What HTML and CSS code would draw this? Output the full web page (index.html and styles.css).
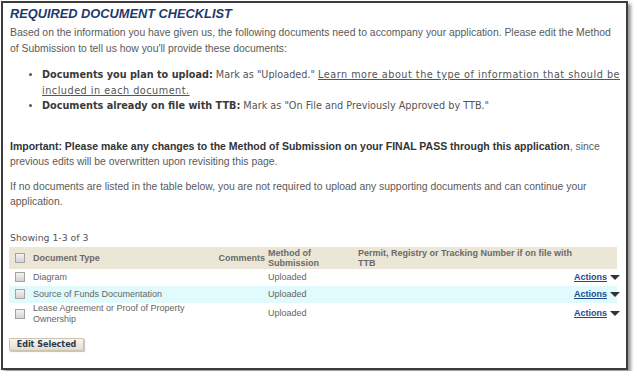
FILE: index.html
```html
<!DOCTYPE html>
<html lang="en">
<head>
    <meta charset="UTF-8">
    <title>Required Document Checklist</title>
    <link rel="stylesheet" href="styles.css">
</head>
<body>

    <!-- checklist panel -->
    <div class="panel">
        <h2 class="panel-title">REQUIRED DOCUMENT CHECKLIST</h2>
        <p class="intro">Based on the information you have given us, the following documents need to accompany your application. Please edit the Method of Submission to tell us how you'll provide these documents:</p>

        <ul class="rules">
            <li><strong>Documents you plan to upload:</strong> Mark as "Uploaded." <a href="#">Learn more about the type of information that should be included in each document.</a></li>
            <li><strong>Documents already on file with TTB:</strong> Mark as "On File and Previously Approved by TTB."</li>
        </ul>

        <p class="important"><strong>Important: Please make any changes to the Method of Submission on your FINAL PASS through this application</strong>, since previous edits will be overwritten upon revisiting this page.</p>
        <p class="note">If no documents are listed in the table below, you are not required to upload any supporting documents and can continue your application.</p>

        <div class="showing">Showing 1-3 of 3</div>

        <table class="docs">
            <colgroup>
                <col class="w-check">
                <col class="w-type">
                <col class="w-comments">
                <col class="w-method">
                <col class="w-permit">
                <col>
            </colgroup>
            <thead>
                <tr>
                    <th class="col-check"><span class="cb"></span></th>
                    <th>Document Type</th>
                    <th class="col-comments">Comments</th>
                    <th>Method of Submission</th>
                    <th class="col-permit">Permit, Registry or Tracking Number if on file with TTB</th>
                    <th></th>
                </tr>
            </thead>
            <tbody>
                <tr>
                    <td class="col-check"><span class="cb"></span></td>
                    <td>Diagram</td>
                    <td></td>
                    <td>Uploaded</td>
                    <td></td>
                    <td class="col-actions"><a href="#">Actions</a><span class="caret"></span></td>
                </tr>
                <tr class="alt">
                    <td class="col-check"><span class="cb"></span></td>
                    <td>Source of Funds Documentation</td>
                    <td></td>
                    <td>Uploaded</td>
                    <td></td>
                    <td class="col-actions"><a href="#">Actions</a><span class="caret"></span></td>
                </tr>
                <tr class="tall">
                    <td class="col-check"><span class="cb"></span></td>
                    <td>Lease Agreement or Proof of Property Ownership</td>
                    <td></td>
                    <td>Uploaded</td>
                    <td></td>
                    <td class="col-actions"><a href="#">Actions</a><span class="caret"></span></td>
                </tr>
            </tbody>
        </table>

        <button class="edit-btn">Edit Selected</button>
    </div>

</body>
</html>
```

FILE: styles.css
```css
body {
    margin: 0;
    background: #fff;
    font-family: "Liberation Sans", Arial, sans-serif;
    font-size: 10.4px;
    color: #5a5a5a;
}

/* outer frame with drop shadow */
.panel {
    box-sizing: border-box;
    margin: 1px;
    width: 627px;
    height: 369px;
    padding: 2px 4px 0 7px;
    border: 2px solid #3c3c3c;
    box-shadow: 3px 3px 3px rgba(0, 0, 0, 0.4);
}

.panel-title {
    margin: 0;
    font-size: 12.8px;
    line-height: 17px;
    font-style: italic;
    font-weight: bold;
    color: #1c3a6e;
}

.intro {
    margin: 3px 0 0;
    line-height: 16px;
}

/* bullet list in verdana-ish face */
.rules {
    margin: 10px 0 0;
    padding-left: 32px;
    font-family: "DejaVu Sans", Verdana, sans-serif;
    font-size: 9.7px;
    line-height: 15.5px;
    color: #555;
}

.rules strong {
    color: #3a3a3a;
}

.rules a {
    color: #555;
    letter-spacing: 0.5px;
}

.important {
    margin: 25px 0 0;
    line-height: 15px;
}

.important strong {
    font-size: 10.5px;
    color: #333;
}

.note {
    margin: 10px 0 0;
    line-height: 15px;
}

.showing {
    margin-top: 21px;
    line-height: 16px;
    font-family: "DejaVu Sans", Verdana, sans-serif;
    font-size: 9.3px;
    color: #555;
}

/* documents table */
.docs {
    width: 608px;
    margin: 1px 0 0 -1px;
    border-collapse: collapse;
    table-layout: fixed;
    font-size: 9px;
}

.w-check { width: 22px; }
.w-type { width: 159px; }
.w-comments { width: 76px; }
.w-method { width: 90px; }
.w-permit { width: 218px; }

.docs th {
    height: 22px;
    padding: 0 2px;
    background: #ebe6d6;
    text-align: left;
    font-weight: bold;
    color: #6a6a6a;
    line-height: 10px;
    vertical-align: middle;
}

.docs td {
    height: 17px;
    padding: 0 2px;
    color: #666;
    line-height: 11px;
    vertical-align: middle;
}

.docs tr.alt td {
    background: #e1fafb;
}

.docs tr.tall td {
    height: 21px;
}

.docs .col-check {
    padding: 0;
    text-align: center;
}

.docs th.col-comments {
    text-align: right;
    padding-right: 1px;
}

.docs th.col-permit {
    padding-right: 0;
}

.docs .col-actions {
    text-align: right;
    white-space: nowrap;
    padding: 0 1px 0 0;
}

.col-actions a {
    color: #1d4b8f;
    font-weight: bold;
}

.caret {
    display: inline-block;
    width: 0;
    height: 0;
    margin-left: 3px;
    vertical-align: middle;
    border-left: 5px solid transparent;
    border-right: 5px solid transparent;
    border-top: 5px solid #333;
}

.cb {
    display: inline-block;
    width: 8px;
    height: 8px;
    border: 1px solid #a3a3a3;
    background: linear-gradient(#f2f2f2, #d4d4d4);
    vertical-align: middle;
}

.edit-btn {
    display: block;
    margin: 13px 0 0 -1px;
    width: 75px;
    height: 13px;
    padding: 0;
    font-family: "DejaVu Sans", Verdana, sans-serif;
    font-size: 8px;
    font-weight: bold;
    line-height: 11px;
    color: #2a3650;
    border: 1px solid #c9c3b0;
    border-radius: 1px;
    background: linear-gradient(#f8f6ee, #e2dccb);
    box-shadow: 1px 1px 1px rgba(0, 0, 0, 0.25);
}
```
